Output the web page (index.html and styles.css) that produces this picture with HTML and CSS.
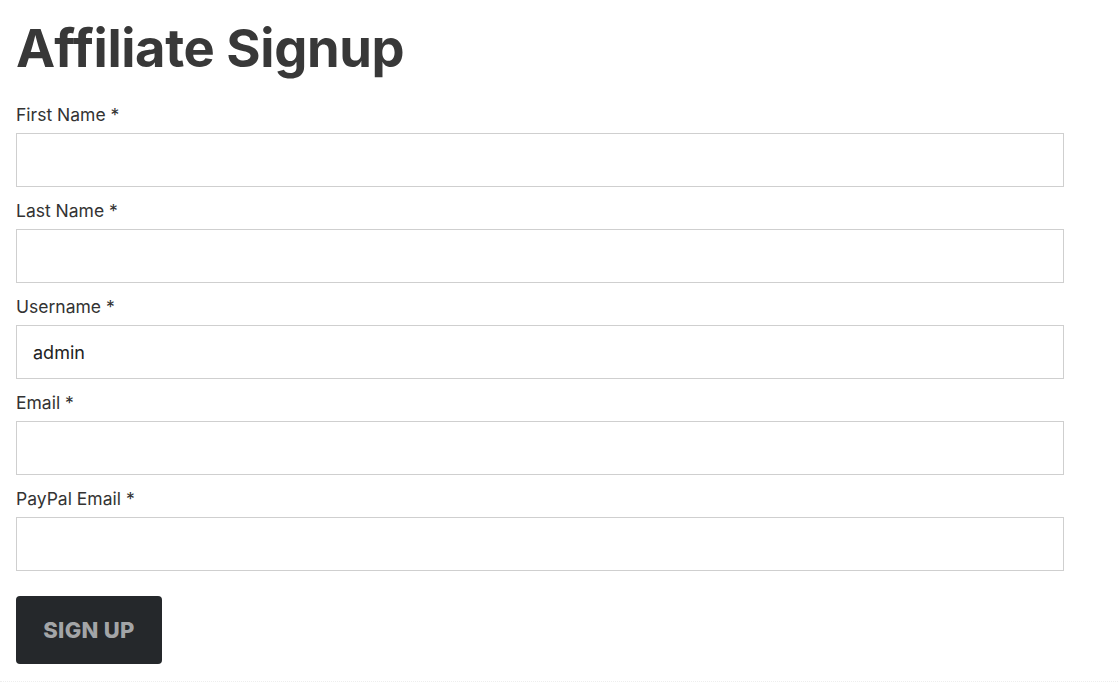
FILE: index.html
```html
<!DOCTYPE html>
<html lang="en">
<head>
  <meta charset="UTF-8">
  <title>Affiliate Signup</title>
  <meta name="viewport" content="width=device-width, initial-scale=1">
  <link rel="stylesheet" href="styles.css">
</head>
<body>

  <div class="page">
    <h1>Affiliate Signup</h1>

    <form class="signup-form">
      <div class="field">
        <label for="first-name">First Name *</label>
        <input type="text" id="first-name">
      </div>

      <div class="field">
        <label for="last-name">Last Name *</label>
        <input type="text" id="last-name">
      </div>

      <div class="field">
        <label for="username">Username *</label>
        <input type="text" id="username" value="admin">
      </div>

      <div class="field">
        <label for="email">Email *</label>
        <input type="email" id="email">
      </div>

      <div class="field">
        <label for="paypal-email">PayPal Email *</label>
        <input type="email" id="paypal-email">
      </div>

      <!-- 送信ボタン -->
      <button type="submit" class="signup-button">Sign Up</button>
    </form>
  </div>

</body>
</html>
```

FILE: styles.css
```css
  * {
    box-sizing: border-box;
  }

  body {
    font-family: Inter, 'Liberation Sans', sans-serif;
    margin: 0;
    background: #fff;
    color: #333;
    min-height: 100vh;
  }

  .page {
    padding: 0 54px 16px 16px;
    height: 682px;
    border-bottom: 1px dotted #eee;
  }

  h1 {
    margin: 0;
    padding-top: 14px;
    font-size: 52.5px;
    line-height: 68px;
    font-weight: 700;
    color: #383838;
    letter-spacing: -0.4px;
  }

  .signup-form {
    margin-top: 22px;
  }

  .field {
    margin-bottom: 13px;
  }

  label {
    display: block;
    font-size: 17.5px;
    line-height: 22px;
    color: #333;
    margin-bottom: 7px;
  }

  input {
    display: block;
    width: 100%;
    height: 54px;
    padding: 0 16px;
    font-family: inherit;
    font-size: 18px;
    color: #222;
    border: 1px solid #cfcfcf;
    border-radius: 0;
    background-color: #fff;
  }

  .signup-button {
    margin-top: 12px;
    width: 146px;
    height: 68px;
    font-family: inherit;
    font-size: 22px;
    font-weight: 800;
    letter-spacing: 0.3px;
    text-transform: uppercase;
    color: #a3a5a7;
    background-color: #25282b;
    border: none;
    border-radius: 4px;
    cursor: pointer;
  }
```
